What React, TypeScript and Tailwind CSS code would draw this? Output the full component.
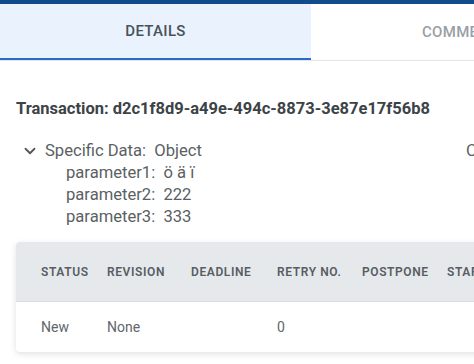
import { ChevronDown } from "lucide-react";

const cols = [
  { label: "STATUS", w: "w-[66px]" },
  { label: "REVISION", w: "w-[84px]" },
  { label: "DEADLINE", w: "w-[86px]" },
  { label: "RETRY NO.", w: "w-[85px]" },
  { label: "POSTPONE", w: "w-[85px]" },
  { label: "START", w: "w-[90px]" },
];

const row = ["New", "None", "", "0", "", ""];

export default function App() {
  return (
    <div className="w-[474px] h-[364px] overflow-hidden bg-white font-['Roboto',sans-serif]">
      {/* top bar */}
      <div className="h-[4px] bg-[#0f4c8c]" />

      {/* tabs */}
      <div className="flex h-[57px] border-b border-[#e3e6e8]">
        <div className="w-[311px] shrink-0 bg-[#eaf3fd] border-b-2 border-[#2a6bc0] flex items-center justify-center text-[15px] font-medium tracking-[0.3px] text-[#47525b]">
          DETAILS
        </div>
        <div className="flex-1 flex items-center pl-[111px] text-[15px] font-medium tracking-[0.3px] text-[#9a9fa4] whitespace-nowrap">
          COMMENTS
        </div>
      </div>

      <div className="pl-4 pt-[38px]">
        <div className="text-[16.5px] font-bold text-[#3c4347] leading-5">
          Transaction: d2c1f8d9-a49e-494c-8873-3e87e17f56b8
        </div>

        <div className="relative mt-[21px] text-[16.6px] text-[#5a5f63] leading-[22px]">
          <div className="flex items-center">
            <ChevronDown className="ml-[5px] w-[18px] h-[18px] text-[#555]" strokeWidth={2.4} />
            <span className="ml-[6px]">Specific Data:&nbsp; Object</span>
          </div>
          <div className="pl-[50px]">
            <div>parameter1:&nbsp; ö ä ï</div>
            <div>parameter2:&nbsp; 222</div>
            <div>parameter3:&nbsp; 333</div>
          </div>
          <span className="absolute left-[450px] top-0">C</span>
        </div>

        <div className="mt-[14px] w-[560px] rounded-[4px] overflow-hidden bg-white shadow-[0_2px_6px_rgba(0,0,0,0.12)]">
          <div className="flex h-[60px] items-center bg-[#e6e9ec] border-b border-[#d9dde0] pl-[25px]">
            {cols.map((c) => (
              <div
                key={c.label}
                className={`${c.w} shrink-0 text-[12px] font-semibold tracking-[0.6px] text-[#565d63] whitespace-nowrap`}
              >
                {c.label}
              </div>
            ))}
          </div>
          <div className="flex h-[50px] items-center pl-[25px]">
            {row.map((v, i) => (
              <div
                key={i}
                className={`${cols[i].w} shrink-0 text-[14px] text-[#5f666b]`}
              >
                {v}
              </div>
            ))}
          </div>
        </div>
      </div>
    </div>
  );
}
